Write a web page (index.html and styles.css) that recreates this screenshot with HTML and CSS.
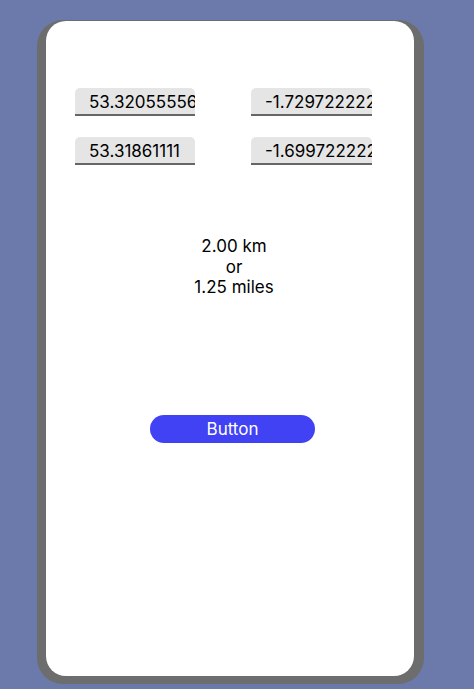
FILE: index.html
```html
<!DOCTYPE html>
<html lang="en">

<head>
    <meta charset="UTF-8">
    <meta name="viewport" content="width=device-width, initial-scale=1.0">
    <title>Distance</title>
    <link rel="stylesheet" href="styles.css">
</head>

<body>
    <div class="device">
        <div class="screen">
            <div class="coords">
                <input class="coord" type="text" value="53.32055556">
                <input class="coord" type="text" value="-1.729722222">
                <input class="coord" type="text" value="53.31861111">
                <input class="coord" type="text" value="-1.699722222">
            </div>
            <div class="result">
                <div>2.00 km</div>
                <div>or</div>
                <div>1.25 miles</div>
            </div>
            <button class="calc">Button</button>
        </div>
    </div>
</body>

</html>
```

FILE: styles.css
```css
body {
    margin: 0;
    height: 689px;
    overflow: hidden;
    background-color: #6b7aab;
    font-family: Inter, 'Noto Sans', sans-serif;
}

.device {
    box-sizing: border-box;
    display: flex;
    margin: 20px 0 0 37px;
    width: 387px;
    height: 664px;
    padding: 1px 10px 8px 9px;
    background-color: #6d6d6d;
    border-radius: 26px;
}

.screen {
    flex: 1;
    display: flex;
    flex-direction: column;
    background-color: #ffffff;
    border-radius: 20px;
    padding-top: 67px;
}

.coords {
    display: grid;
    grid-template-columns: 120px 121px;
    column-gap: 56px;
    row-gap: 21px;
    margin-left: 29px;
}

.coord {
    box-sizing: border-box;
    width: 100%;
    height: 28px;
    margin: 0;
    padding: 2px 0 0 14px;
    border: none;
    border-bottom: 2px solid #666666;
    border-radius: 5px 5px 0 0;
    background-color: #e5e5e5;
    color: #000000;
    font-family: Inter, 'Noto Sans', sans-serif;
    font-size: 17px;
    outline: none;
}

.result {
    margin-top: 71px;
    margin-left: 8px;
    text-align: center;
    font-size: 17px;
    line-height: 20.5px;
    color: #000000;
}

.calc {
    margin: 117px 0 0 104px;
    width: 165px;
    height: 28px;
    padding: 0;
    border: none;
    border-radius: 14px;
    background-color: #4242f5;
    color: #ffffff;
    font-family: Inter, 'Noto Sans', sans-serif;
    font-size: 17px;
}
```
